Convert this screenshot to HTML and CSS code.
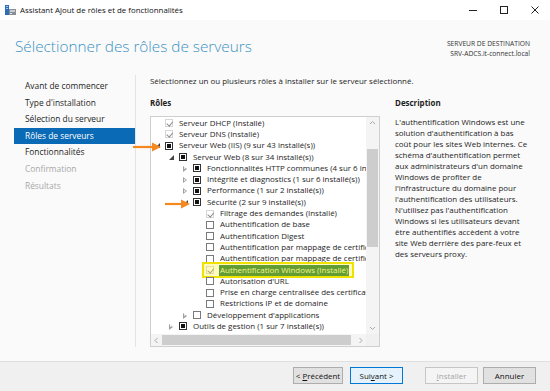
FILE: index.html
```html
<!DOCTYPE html>
<html lang="fr">
<head>
<meta charset="utf-8">
<title>Assistant Ajout de rôles et de fonctionnalités</title>
<link rel="stylesheet" href="styles.css">
</head>
<body>
<div class="titlebar">
  <svg class="app-icon" viewBox="0 0 11 10" width="11" height="10">
    <rect x="0" y="0" width="4" height="10" fill="#2a6fb8"/>
    <rect x="1" y="1" width="2" height="1" fill="#9cc6ee"/>
    <rect x="1" y="3" width="2" height="1" fill="#9cc6ee"/>
    <rect x="4" y="4" width="7" height="6" fill="#8a8f96"/>
    <rect x="5" y="5" width="5" height="2" fill="#c9ced4"/>
    <rect x="5" y="8" width="2" height="1" fill="#e2e5e8"/>
  </svg>
  <div class="title">Assistant Ajout de rôles et de fonctionnalités</div>
  <div class="controls">
    <div class="ctrl"><svg width="10" height="10" viewBox="0 0 10 10"><path d="M1 5.5h8" stroke="#222" stroke-width="1"/></svg></div>
    <div class="ctrl"><svg width="10" height="10" viewBox="0 0 10 10"><rect x="1.5" y="1.5" width="7" height="7" fill="none" stroke="#222" stroke-width="1"/></svg></div>
    <div class="ctrl"><svg width="10" height="10" viewBox="0 0 10 10"><path d="M1.5 1.5l7 7M8.5 1.5l-7 7" stroke="#222" stroke-width="1"/></svg></div>
  </div>
</div>

<div class="header">
  <h1 class="heading">Sélectionner des rôles de serveurs</h1>
  <div class="dest">
    <div>SERVEUR DE DESTINATION</div>
    <div>SRV-ADCS.it-connect.local</div>
  </div>
</div>

<div class="main">
  <nav class="nav">
    <div class="nav-item">Avant de commencer</div>
    <div class="nav-item">Type d'installation</div>
    <div class="nav-item">Sélection du serveur</div>
    <div class="nav-item active">Rôles de serveurs</div>
    <div class="nav-item">Fonctionnalités</div>
    <div class="nav-item disabled">Confirmation</div>
    <div class="nav-item disabled">Résultats</div>
  </nav>

  <section class="content">
    <p class="intro">Sélectionnez un ou plusieurs rôles à installer sur le serveur sélectionné.</p>
    <div class="columns">
      <div class="roles">
        <div class="col-title">Rôles</div>
        <div class="listbox">
          <div class="rows">
            <div class="row l0"><span class="exp"></span><span class="cb done"></span><span class="lbl">Serveur DHCP (Installé)</span></div>
            <div class="row l0"><span class="exp"></span><span class="cb done"></span><span class="lbl">Serveur DNS (Installé)</span></div>
            <div class="row l0"><span class="exp open"></span><span class="cb part"></span><span class="lbl">Serveur Web (IIS) (9 sur 43 installé(s))</span></div>
            <div class="row l1"><span class="exp open"></span><span class="cb part"></span><span class="lbl">Serveur Web (8 sur 34 installé(s))</span></div>
            <div class="row l2"><span class="exp closed"></span><span class="cb part"></span><span class="lbl">Fonctionnalités HTTP communes (4 sur 6 installé(s))</span></div>
            <div class="row l2"><span class="exp closed"></span><span class="cb part"></span><span class="lbl">Intégrité et diagnostics (1 sur 6 installé(s))</span></div>
            <div class="row l2"><span class="exp closed"></span><span class="cb part"></span><span class="lbl">Performance (1 sur 2 installé(s))</span></div>
            <div class="row l2"><span class="exp open"></span><span class="cb part"></span><span class="lbl">Sécurité (2 sur 9 installé(s))</span></div>
            <div class="row l3"><span class="exp"></span><span class="cb done"></span><span class="lbl">Filtrage des demandes (Installé)</span></div>
            <div class="row l3"><span class="exp"></span><span class="cb"></span><span class="lbl">Authentification de base</span></div>
            <div class="row l3"><span class="exp"></span><span class="cb"></span><span class="lbl">Authentification Digest</span></div>
            <div class="row l3"><span class="exp"></span><span class="cb"></span><span class="lbl">Authentification par mappage de certificat client</span></div>
            <div class="row l3"><span class="exp"></span><span class="cb"></span><span class="lbl">Authentification par mappage de certificat client IIS</span></div>
            <div class="row l3 selected"><span class="exp"></span><span class="cb done"></span><span class="lbl">Authentification Windows (Installé)</span><span class="marker"></span></div>
            <div class="row l3"><span class="exp"></span><span class="cb"></span><span class="lbl">Autorisation d'URL</span></div>
            <div class="row l3"><span class="exp"></span><span class="cb"></span><span class="lbl">Prise en charge centralisée des certificats SSL</span></div>
            <div class="row l3"><span class="exp"></span><span class="cb"></span><span class="lbl">Restrictions IP et de domaine</span></div>
            <div class="row l2"><span class="exp closed"></span><span class="cb"></span><span class="lbl">Développement d'applications</span></div>
            <div class="row l1"><span class="exp closed"></span><span class="cb part"></span><span class="lbl">Outils de gestion (1 sur 7 installé(s))</span></div>
          </div>
          <div class="vscroll">
            <svg class="sarrow" width="13" height="12" viewBox="0 0 13 12"><path d="M4 7l2.5-2.5L9 7" fill="none" stroke="#a6a6a6" stroke-width="1"/></svg>
            <div class="vthumb"></div>
            <svg class="sarrow bottom" width="13" height="12" viewBox="0 0 13 12"><path d="M4 5l2.5 2.5L9 5" fill="none" stroke="#a6a6a6" stroke-width="1"/></svg>
          </div>
          <div class="hscroll">
            <svg class="sarrow" width="11" height="11" viewBox="0 0 11 11"><path d="M6.5 3L4 5.5 6.5 8" fill="none" stroke="#a6a6a6" stroke-width="1"/></svg>
            <div class="hthumb"></div>
            <svg class="sarrow" width="11" height="11" viewBox="0 0 11 11"><path d="M4.5 3L7 5.5 4.5 8" fill="none" stroke="#a6a6a6" stroke-width="1"/></svg>
          </div>
          <div class="corner"></div>
        </div>
      </div>
      <div class="desc">
        <div class="col-title">Description</div>
        <p class="desc-text">L'authentification Windows est une solution d'authentification à bas coût pour les sites Web internes. Ce schéma d'authentification permet aux administrateurs d'un domaine Windows de profiter de l'infrastructure du domaine pour l'authentification des utilisateurs. N'utilisez pas l'authentification Windows si les utilisateurs devant être authentifiés accèdent à votre site Web derrière des pare-feux et des serveurs proxy.</p>
      </div>
    </div>
  </section>
</div>

<div class="footer">
  <button class="btn">&lt; <u>P</u>récédent</button>
  <button class="btn focus">Sui<u>v</u>ant &gt;</button>
  <button class="btn disabled"><u>I</u>nstaller</button>
  <button class="btn">Annuler</button>
</div>

<svg class="annot arrow1" width="30" height="12" viewBox="0 0 30 12"><path d="M0 6h21" stroke="#f5891f" stroke-width="2.2"/><path d="M19 1.5L28 6 19 10.5z" fill="#f5891f"/></svg>
<svg class="annot arrow2" width="27" height="12" viewBox="0 0 27 12"><path d="M0 6h18" stroke="#f5891f" stroke-width="2.2"/><path d="M16 1.5L25 6 16 10.5z" fill="#f5891f"/></svg>
</body>
</html>
```
FILE: styles.css
```css
* { box-sizing: border-box; }
html, body { margin: 0; padding: 0; }
body {
  width: 550px;
  height: 391px;
  overflow: hidden;
  position: relative;
  display: flex;
  flex-direction: column;
  font-family: "Open Sans", "Noto Sans", sans-serif;
  font-size: 7.95px;
  color: #1e1e1e;
  background: #fafafa;
}

/* title bar */
.titlebar {
  height: 20px;
  flex: none;
  display: flex;
  align-items: center;
  padding-left: 5px;
  background: #fff;
}
.app-icon { margin-right: 4px; }
.title { flex: 1; font-size: 7.87px; color: #111; }
.controls { display: flex; }
.ctrl { width: 31px; height: 20px; display: flex; align-items: center; justify-content: center; }

/* header */
.header {
  height: 55px;
  flex: none;
  display: flex;
  justify-content: space-between;
  align-items: flex-start;
  padding: 0 20px 0 15px;
}
.heading {
  margin: 16px 0 0;
  font-size: 15.3px;
  font-weight: 300;
  color: #3e92c4;
}
.dest {
  margin-top: 19px;
  text-align: right;
  font-size: 6.7px;
  line-height: 10px;
  color: #333;
}

/* main */
.main {
  flex: 1;
  display: flex;
  padding-bottom: 14px;
}
.nav {
  width: 136px;
  flex: none;
  border-right: 1px solid #e4e4e4;
  padding: 3px 0 0 14px;
}
.nav-item {
  height: 16.6px;
  line-height: 16.6px;
  padding-left: 11px;
  font-size: 8.4px;
  color: #1e1e1e;
}
.nav-item.active { background: #0a6ab6; color: #fff; }
.nav-item.disabled { color: #a8a8a8; }

.content {
  flex: 1;
  padding: 0 14px;
  display: flex;
  flex-direction: column;
}
.intro { margin: 1px 0 0; line-height: 11px; white-space: nowrap; }
.columns { display: flex; gap: 15px; flex: 1; margin-top: 11px; }
.roles { width: 230px; flex: none; display: flex; flex-direction: column; }
.col-title { font-weight: 700; line-height: 11px; height: 18px; }

.listbox {
  flex: 1;
  background: #fff;
  border: 1px solid #cfcfcf;
  display: grid;
  grid-template-columns: 1fr 13px;
  grid-template-rows: 1fr 12px;
}
.rows { overflow: hidden; padding-top: 0.5px; }
.row {
  height: 11.3px;
  display: flex;
  align-items: center;
  white-space: nowrap;
  position: relative;
}
.row.l0 { padding-left: 1px; }
.row.l1 { padding-left: 15px; }
.row.l2 { padding-left: 29px; }
.row.l3 { padding-left: 42px; }
.exp { width: 13px; height: 11px; flex: none; position: relative; }
.exp.closed::before {
  content: "";
  position: absolute;
  left: 3px; top: 3px;
  border-left: 4px solid #a0a0a0;
  border-top: 3px solid transparent;
  border-bottom: 3px solid transparent;
}
.exp.closed::after {
  content: "";
  position: absolute;
  left: 4px; top: 4.5px;
  border-left: 2px solid #fff;
  border-top: 1.5px solid transparent;
  border-bottom: 1.5px solid transparent;
}
.exp.open::before {
  content: "";
  position: absolute;
  left: 3px; top: 3px;
  border-right: 5px solid #444;
  border-top: 5px solid transparent;
}
.cb {
  width: 8px; height: 8px;
  flex: none;
  border: 1px solid #7a7a7a;
  background: #fff;
  margin-right: 6px;
  position: relative;
}
.cb.part { border-color: #333; }
.cb.part::before {
  content: "";
  position: absolute;
  left: 1px; top: 1px;
  width: 4px; height: 4px;
  background: #111;
}
.cb.done { border-color: #d6d6d6; }
.cb.done::before {
  content: "";
  position: absolute;
  left: 2px; top: 0;
  width: 2.5px; height: 4.5px;
  border-right: 1px solid #8c8c8c;
  border-bottom: 1px solid #8c8c8c;
  transform: rotate(40deg);
}
.lbl { line-height: 11px; }
.selected .lbl { background: #1f7a38; color: #eef6b0; padding: 0 1px; margin-left: -1px; }
.marker {
  position: absolute;
  left: 51px; top: -2.5px;
  width: 152px; height: 16px;
  border: 2px solid #efe200;
  background: rgba(255, 240, 40, 0.3);
}

.vscroll {
  background: #f4f4f4;
  display: flex;
  flex-direction: column;
  align-items: center;
}
.vthumb { width: 11px; height: 98px; background: #cdcdcd; margin-top: 20px; }
.sarrow.bottom { margin-top: auto; }
.hscroll {
  background: #f4f4f4;
  display: flex;
  align-items: center;
}
.hthumb { flex: 1; height: 10px; background: #cdcdcd; margin-right: 4px; }
.corner { background: #f0f0f0; }

.desc { width: 134px; flex: none; }
.desc-text { margin: 0; line-height: 11px; padding-top: 1px; }

/* footer */
.footer {
  height: 30px;
  flex: none;
  border-top: 1px solid #dfdfdf;
  background: #f0f0f0;
  display: flex;
  align-items: center;
  justify-content: flex-end;
  padding: 0 14px 2px 0;
}
.btn {
  height: 17px;
  width: 53px;
  margin-left: 5px;
  padding: 0;
  font-family: "Open Sans", "Noto Sans", sans-serif;
  font-size: 7.95px;
  color: #111;
  background: #e1e1e1;
  border: 1px solid #adadad;
}
.btn:first-child { width: 50px; }
.btn.focus { margin-left: 7px; background: #e5f1fb; border-color: #0078d7; }
.btn.disabled { margin-left: 22px; background: #f4f4f4; border-color: #c6c6c6; color: #a6a6a6; }

.annot { position: absolute; }
.arrow1 { left: 133px; top: 141px; }
.arrow2 { left: 165px; top: 198px; }
```
